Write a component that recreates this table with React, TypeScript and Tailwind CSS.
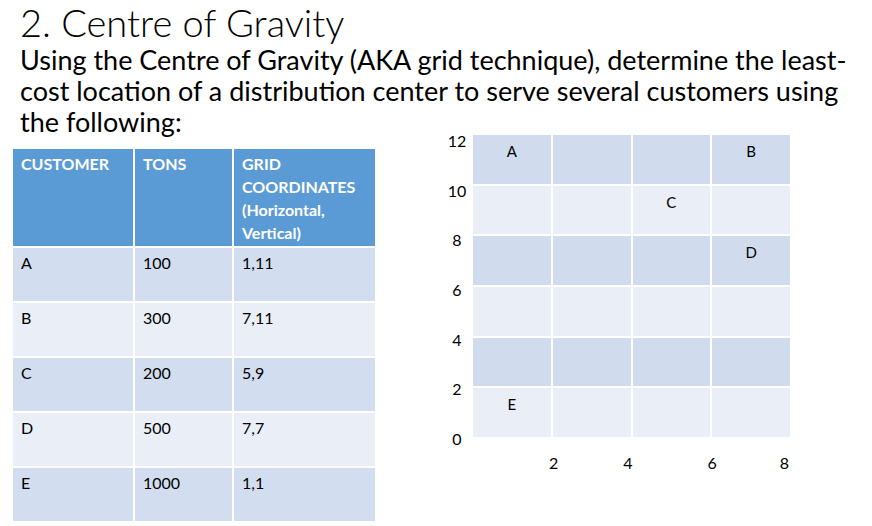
const rows = [
  { customer: "A", tons: "100", grid: "1,11" },
  { customer: "B", tons: "300", grid: "7,11" },
  { customer: "C", tons: "200", grid: "5,9" },
  { customer: "D", tons: "500", grid: "7,7" },
  { customer: "E", tons: "1000", grid: "1,1" },
];

// plot cells, top band first; letter placed in [band][col]
const marks: Record<string, string> = {
  "0-0": "A",
  "0-3": "B",
  "1-2": "C",
  "2-3": "D",
  "5-0": "E",
};

export default function App() {
  return (
    <div className="w-[872px] h-[526px] bg-white overflow-hidden text-black font-[Lato,sans-serif]">
      <h1 className="pl-[20px] text-[38px] leading-[44px] font-light">2. Centre of Gravity</h1>
      <p className="pl-[20px] text-[27px] leading-[31px] whitespace-nowrap">
        Using the Centre of Gravity (AKA grid technique), determine the least-
        <br />
        cost location of a distribution center to serve several customers using
        <br />
        the following:
      </p>

      <div className="flex items-start mt-[-4px]">
        {/* Data table */}
        <div className="ml-[13px] mt-[16px] grid grid-cols-[120px_97px_141px] gap-[2px] text-[16px]">
          <div className="h-[97px] bg-[#5b9bd5] text-white font-bold leading-[23px] pl-[8px] pt-[3px]">CUSTOMER</div>
          <div className="h-[97px] bg-[#5b9bd5] text-white font-bold leading-[23px] pl-[8px] pt-[3px]">TONS</div>
          <div className="h-[97px] bg-[#5b9bd5] text-white font-bold leading-[23px] pl-[8px] pt-[3px]">
            GRID
            <br />
            COORDINATES
            <br />
            (Horizontal,
            <br />
            Vertical)
          </div>
          {rows.map((r, i) => {
            const bg = i % 2 === 0 ? "bg-[#d2deef]" : "bg-[#eaeff7]";
            return [
              <div key={r.customer + "c"} className={`h-[53px] ${bg} leading-[20px] pl-[8px] pt-[5px]`}>{r.customer}</div>,
              <div key={r.customer + "t"} className={`h-[53px] ${bg} leading-[20px] pl-[8px] pt-[5px]`}>{r.tons}</div>,
              <div key={r.customer + "g"} className={`h-[53px] ${bg} leading-[20px] pl-[8px] pt-[5px]`}>{r.grid}</div>,
            ];
          })}
        </div>

        {/* Grid chart */}
        <div className="ml-[69px] flex flex-col">
          <div className="flex">
            <div className="w-[26px] h-[314px] flex flex-col justify-between text-center text-[16px] leading-[16px]">
              <span>12</span>
              <span>10</span>
              <span>8</span>
              <span>6</span>
              <span>4</span>
              <span>2</span>
              <span>0</span>
            </div>
            <div className="ml-[3px] mt-[2px] w-[317px] h-[302px] grid grid-cols-4 grid-rows-6 gap-[2px] bg-white text-[15px] leading-[18px]">
              {Array.from({ length: 24 }).map((_, k) => {
                const band = Math.floor(k / 4);
                const col = k % 4;
                const bg = band % 2 === 0 ? "bg-[#d0dcee]" : "bg-[#e9eef7]";
                return (
                  <div key={k} className={`${bg} text-center pt-[7px]`}>
                    {marks[`${band}-${col}`] ?? ""}
                  </div>
                );
              })}
            </div>
          </div>
          <div className="ml-[29px] mt-[7px] w-[317px] grid grid-cols-4 text-[16px] leading-[18px]">
            <span className="justify-self-end translate-x-[6px]">2</span>
            <span className="justify-self-end translate-x-[1px]">4</span>
            <span className="justify-self-end translate-x-[6px]">6</span>
            <span className="justify-self-end translate-x-[-1px]">8</span>
          </div>
        </div>
      </div>
    </div>
  );
}
